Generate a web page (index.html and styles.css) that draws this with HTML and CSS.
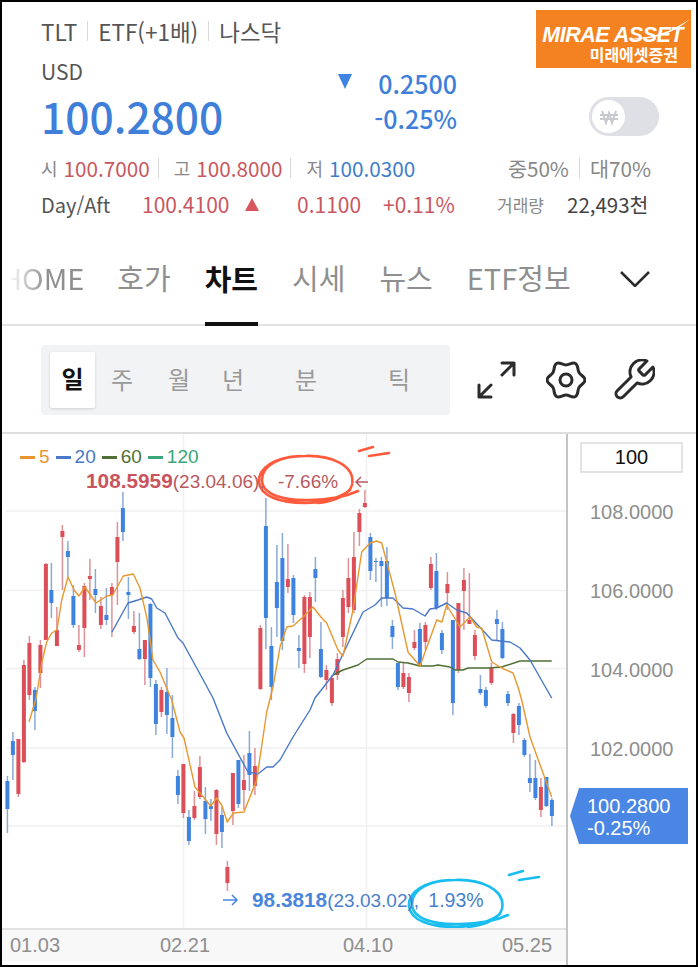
FILE: index.html
```html
<!DOCTYPE html>
<html lang="ko">
<head>
    <meta charset="UTF-8">
    <meta name="viewport" content="width=device-width, initial-scale=1.0">
    <title>TLT 차트</title>
    <link rel="stylesheet" href="styles.css">
</head>
<body>
<div class="page">

    <div class="logo">
        <div class="logo-en">MIRAE ASSET</div>
        <div class="logo-ko">미래에셋증권</div>
        <svg class="logo-swoosh" viewBox="0 0 155 58"><path d="M92 28 C115 29 135 22 154 9 C136 25 114 31 92 28z"/></svg>
    </div>

    <header class="quote">
        <div class="meta">
            <span>TLT</span><i class="sep"></i><span>ETF(+1배)</span><i class="sep"></i><span>나스닥</span>
        </div>
        <div class="quote-main">
            <div class="price-col">
                <div class="usd">USD</div>
                <div class="price">100.2800</div>
            </div>
            <div class="change-col">
                <div class="change-row"><span class="arrow-down"></span><span>0.2500</span></div>
                <div class="change-row"><span></span><span>-0.25%</span></div>
            </div>
            <div class="toggle">
                <div class="toggle-knob">
                    <svg viewBox="0 0 24 24" width="24" height="24"><path d="M3 10h18M3 14h18M5 6l4 12 3-10 3 10 4-12"/></svg>
                </div>
            </div>
        </div>
        <div class="stats">
            <div class="stats-left">
                <span class="label">시</span><span class="up">100.7000</span><i class="sep"></i>
                <span class="label">고</span><span class="up">100.8000</span><i class="sep"></i>
                <span class="label">저</span><span class="down">100.0300</span>
            </div>
            <div class="stats-right">
                <span>중50%</span><i class="sep"></i><span>대70%</span>
            </div>
        </div>
        <div class="after">
            <span class="after-name">Day/Aft</span>
            <span class="up after-price">100.4100</span>
            <span class="arrow-up"></span>
            <span class="up after-diff">0.1100</span>
            <span class="up after-rate">+0.11%</span>
            <span class="volume-label">거래량</span>
            <span class="volume">22,493천</span>
        </div>
    </header>

    <nav class="tabs">
        <a class="tab tab-home">HOME</a>
        <a class="tab">호가</a>
        <a class="tab active">차트</a>
        <a class="tab">시세</a>
        <a class="tab">뉴스</a>
        <a class="tab">ETF정보</a>
        <svg class="tab-more" viewBox="0 0 30 16"><path d="M1 1l14 14L29 1"/></svg>
    </nav>

    <div class="toolbar">
        <div class="periods">
            <span class="period active">일</span>
            <span class="period">주</span>
            <span class="period">월</span>
            <span class="period">년</span>
            <span class="period">분</span>
            <span class="period">틱</span>
        </div>
        <svg class="tool tool-expand" viewBox="0 0 40 40">
            <path d="M26 3h12v12M38 3L26 15M15 25L3 37M3 25v12h12"/>
        </svg>
        <svg class="tool tool-gear" viewBox="0 0 40 40">
            <path d="M20 5C23.5 5 26.47 1.8 29.5 3.55C32.53 5.3 31.24 9.47 32.99 12.5C34.74 15.53 39 16.5 39 20C39 23.5 34.74 24.47 32.99 27.5C31.24 30.53 32.53 34.7 29.5 36.45C26.47 38.2 23.5 35 20 35C16.5 35 13.53 38.2 10.5 36.45C7.47 34.7 8.76 30.53 7.01 27.5C5.26 24.47 1 23.5 1 20C1 16.5 5.26 15.53 7.01 12.5C8.76 9.47 7.47 5.3 10.5 3.55C13.53 1.8 16.5 5 20 5z"/>
            <circle cx="20" cy="20" r="6"/>
        </svg>
        <svg class="tool tool-wrench" viewBox="1.5 1.5 21 21">
            <path d="M14.7 6.3a1 1 0 0 0 0 1.4l1.6 1.6a1 1 0 0 0 1.4 0l3.77-3.77a6 6 0 0 1-7.94 7.94l-6.91 6.91a2.12 2.12 0 0 1-3-3l6.91-6.91a6 6 0 0 1 7.94-7.94l-3.76 3.76z"/>
        </svg>
    </div>

    <section class="chart">
        <div class="plot">
            <div class="canvas">
                <svg id="chart-svg" viewBox="2 434 564 494" width="564" height="494"></svg>
                <div class="legend">
                    <span class="ma ma5">5</span>
                    <span class="ma ma20">20</span>
                    <span class="ma ma60">60</span>
                    <span class="ma ma120">120</span>
                </div>
                <div class="high-label"><b>108.5959</b>(23.04.06), <span class="high-pct">-7.66%</span></div>
                <div class="low-label"><b>98.3818</b>(23.03.02), <span class="low-pct">1.93%</span></div>
            </div>
            <div class="xaxis">
                <span>01.03</span>
                <span>02.21</span>
                <span>04.10</span>
                <span>05.25</span>
            </div>
        </div>
        <aside class="yaxis">
            <div class="unit-box">100</div>
            <div class="ticks">
                <span>108.0000</span>
                <span>106.0000</span>
                <span>104.0000</span>
                <span>102.0000</span>
            </div>
            <div class="now-tag">100.2800<br>-0.25%</div>
        </aside>
    </section>
</div>
<script src="chart.js"></script>
</body>
</html>
```

FILE: styles.css
```css
body, html {
    margin: 0;
    padding: 0;
    background-color: white;
    font-family: "Noto Sans CJK KR", "Noto Sans", sans-serif;
}

.page {
    position: relative;
    width: 698px;
    height: 967px;
    box-sizing: border-box;
    border: 2px solid black;
    overflow: hidden;
    background-color: white;
}

.sep {
    display: inline-block;
    width: 1px;
    height: 20px;
    background-color: #d9d9d9;
}

.up {
    color: #c9575f;
}

.down {
    color: #3f7ec8;
}

/* logo */
.logo {
    position: absolute;
    top: 8px;
    left: 534px;
    width: 155px;
    height: 58px;
    background-color: #f58220;
    color: white;
    text-align: right;
    font-family: "Liberation Sans", sans-serif;
    font-weight: bold;
}

.logo-en {
    font-size: 21.5px;
    font-style: italic;
    line-height: 20px;
    letter-spacing: -0.5px;
    padding: 15px 8px 0 0;
    white-space: nowrap;
}

.logo-ko {
    font-family: "Noto Sans CJK KR", sans-serif;
    font-size: 16px;
    line-height: 16px;
    padding: 1px 13px 0 0;
}

.logo-swoosh {
    position: absolute;
    top: 0;
    left: 0;
    width: 155px;
    height: 58px;
}

.logo-swoosh path {
    fill: white;
}

/* quote header */
.quote {
    padding: 15px 45px 12px 39px;
    height: 204px;
    color: #555;
}

.meta {
    display: flex;
    align-items: center;
    gap: 10px;
    font-size: 22.5px;
    line-height: 28px;
    color: #555;
}

.quote-main {
    display: flex;
    margin-top: 12px;
}

.price-col {
    flex: none;
    width: 297px;
}

.usd {
    font-size: 21px;
    line-height: 28px;
}

.price {
    font-size: 42.5px;
    line-height: 60px;
    font-weight: 500;
    color: #3f7fd9;
    margin-top: 1px;
}

.change-col {
    flex: none;
    width: 119px;
    padding-top: 8px;
    color: #3f7fd9;
    font-size: 25px;
    font-weight: 500;
}

.change-row {
    display: flex;
    justify-content: space-between;
    align-items: center;
    height: 35.5px;
}

.arrow-down {
    width: 0;
    height: 0;
    border-left: 7px solid transparent;
    border-right: 7px solid transparent;
    border-top: 15px solid #3f84e5;
    margin-top: -2px;
}

.toggle {
    flex: none;
    width: 70px;
    height: 39px;
    margin: 40px 0 0 132px;
    padding: 3px;
    box-sizing: border-box;
    background-color: #dfe0e5;
    border-radius: 20px;
}

.toggle-knob {
    display: flex;
    align-items: center;
    justify-content: center;
    width: 33px;
    height: 33px;
    background-color: white;
    border-radius: 50%;
}

.toggle-knob svg {
    fill: none;
    stroke: #c9cacf;
    stroke-width: 2;
}

.stats {
    display: flex;
    justify-content: space-between;
    align-items: center;
    height: 30px;
    margin-top: 7px;
    font-size: 20.7px;
}

.stats-left,
.stats-right {
    display: flex;
    align-items: center;
}

.stats-left {
    gap: 6px;
}

.stats-left .sep {
    margin: 0 9px 0 2px;
}

.stats-right {
    gap: 10px;
    color: #888;
}

.label {
    color: #888;
    font-size: 18px;
}

.after {
    display: flex;
    align-items: center;
    height: 30px;
    margin-top: 6px;
    font-size: 21px;
}

.after-name {
    width: 101px;
    font-size: 20px;
}

.after-price {
    width: 103px;
}

.arrow-up {
    width: 0;
    height: 0;
    border-left: 7px solid transparent;
    border-right: 7px solid transparent;
    border-bottom: 13px solid #d9565c;
    margin-right: 38px;
}

.after-diff {
    width: 86px;
}

.after-rate {
    width: 114px;
}

.volume-label {
    width: 70px;
    font-size: 17px;
    color: #888;
}

.volume {
    color: #444;
    font-size: 20.5px;
    white-space: nowrap;
}

/* tabs */
.tabs {
    display: flex;
    align-items: center;
    height: 91px;
    margin-left: -1px;
    border-bottom: 2px solid #e2e2e2;
    position: relative;
}

.tab {
    display: flex;
    align-items: center;
    height: 91px;
    box-sizing: border-box;
    margin-right: 34px;
    padding-bottom: 3px;
    font-size: 29px;
    color: #8f8f8f;
}

.tab-home {
    margin-right: 33px;
    -webkit-mask-image: linear-gradient(to right, transparent 8px, #000 44px);
    mask-image: linear-gradient(to right, transparent 8px, #000 44px);
}

.tab.active {
    color: #111;
    font-weight: bold;
    border-bottom: 4px solid #111;
    margin-bottom: -2px;
    height: 93px;
    padding-bottom: 0;
}

.tab-more {
    width: 30px;
    height: 16px;
    margin-left: 15px;
    fill: none;
    stroke: #2b2b2b;
    stroke-width: 2.5;
}

/* period bar */
.toolbar {
    display: flex;
    align-items: center;
    padding: 19px 0 17px 39px;
}

.periods {
    display: grid;
    grid-template-columns: 45px 54px 60px 48px 98px 88px;
    align-items: center;
    box-sizing: border-box;
    width: 409px;
    height: 70px;
    padding: 7px 9px;
    background-color: #f2f3f5;
    border-radius: 4px;
}

.period {
    padding-bottom: 4px;
    text-align: center;
    font-size: 24px;
    color: #999;
}

.period.active {
    background-color: white;
    color: #111;
    font-weight: bold;
    line-height: 52px;
    border-radius: 2px;
    box-shadow: 0 1px 3px rgba(0, 0, 0, 0.15);
}

.tool {
    width: 40px;
    height: 40px;
    fill: none;
    stroke: #2b2b2b;
    stroke-linejoin: round;
    stroke-linecap: round;
    stroke-width: 3;
}

.tool-expand {
    margin-left: 26px;
}

.tool-gear {
    margin-left: 30px;
}

.tool-wrench {
    width: 42px;
    height: 42px;
    margin-left: 27px;
    stroke-width: 1.5;
}

/* chart */
.chart {
    display: flex;
    border-top: 2px solid #dedede;
    height: 531px;
}

.plot {
    width: 564px;
    font-family: "Liberation Sans", sans-serif;
}

.canvas {
    position: relative;
    height: 494px;
}

.canvas svg {
    display: block;
}

.legend {
    position: absolute;
    top: 12px;
    left: 18px;
    display: flex;
    gap: 6px;
    font-size: 19px;
    line-height: 22px;
}

.ma {
    display: flex;
    align-items: center;
    gap: 4px;
}

.ma::before {
    content: "";
    width: 15px;
    height: 3px;
    background-color: currentColor;
}

.ma5 {
    color: #e8952f;
}

.ma20 {
    color: #4a78c8;
}

.ma60 {
    color: #4f6f35;
}

.ma120 {
    color: #3aa679;
}

.high-label,
.low-label {
    position: absolute;
    font-size: 19px;
    line-height: 22px;
    white-space: nowrap;
}

.high-label {
    top: 36px;
    left: 84px;
    color: #b85a60;
}

.high-label b {
    font-size: 20.8px;
    color: #c9545d;
}

.high-pct {
    margin-left: 8px;
}

.low-label {
    top: 455px;
    left: 250px;
    color: #4a7fc9;
}

.low-label b {
    font-size: 20.8px;
    color: #4a86dc;
}

.low-pct {
    margin-left: 4px;
    font-size: 19.5px;
}

.xaxis {
    display: grid;
    grid-template-columns: 150px 183px 159px 60px;
    align-items: center;
    height: 31px;
    margin: 0 0 4px;
    padding: 0 0 0 8px;
    border-top: 2px solid #e2e2e2;
    background-color: #f8f8f8;
    font-size: 20px;
    color: #8e8e8e;
}

.yaxis {
    position: relative;
    flex: 1;
    border-left: 2px solid #c4c4c4;
    font-family: "Liberation Sans", sans-serif;
    font-size: 20px;
}

.unit-box {
    width: 99px;
    height: 27px;
    margin: 8px 0 0 12px;
    border: 2px solid #e3e3e3;
    text-align: center;
    line-height: 27px;
    color: #111;
}

.ticks {
    display: grid;
    grid-auto-rows: 79px;
    margin-top: 24px;
    padding-left: 22px;
    color: #8e8e8e;
    line-height: 30px;
}

.now-tag {
    position: absolute;
    top: 354px;
    left: 2px;
    width: 118px;
    height: 56px;
    box-sizing: border-box;
    padding: 7px 0 0 17px;
    background-color: #4a86e4;
    color: white;
    line-height: 22px;
    clip-path: polygon(9px 0, 100% 0, 100% 100%, 9px 100%, 0 50%);
}
```

FILE: chart.js
```js
// candles: [type, wick top, body top, body bottom, wick bottom], y in page pixels
const candles = [
    ["b",776,781,809,833],["b",732,741,755,780],["r",739,739,794,797],["r",660,665,762,763],["r",636,643,695,700],
    ["b",687,690,711,730],["r",640,645,673,688],["r",563,564,640,640],["b",563,590,603,618],["r",607,630,646,646],
    ["r",525,531,537,590],["b",541,551,557,577],["b",585,596,625,628],["r",625,645,650,652],["r",583,586,628,657],
    ["r",559,576,579,600],["b",569,589,595,613],["r",597,606,625,629],["b",588,615,620,625],["r",583,587,595,637],
    ["r",522,537,562,605],["b",492,508,532,541],["b",577,592,595,619],["r",611,626,632,634],["b",613,649,659,660],
    ["r",640,640,659,685],["b",603,604,678,687],["b",680,684,724,735],["r",687,690,712,717],["b",668,692,715,734],
    ["b",695,718,737,758],["b",770,776,795,804],["r",764,764,813,818],["b",810,817,841,845],["r",791,806,818,820],
    ["r",756,767,797,799],["b",787,801,819,834],["b",799,806,809,821],["r",789,790,834,845],["b",807,815,832,848],
    ["r",861,867,883,891],["r",773,773,811,825],["b",760,760,804,808],["r",755,780,790,810],["b",731,753,775,791],
    ["r",748,766,786,795],["r",625,628,689,690],["b",498,526,618,649],["b",627,646,687,700],["b",545,582,608,637],
    ["b",533,558,641,650],["r",544,579,587,593],["b",575,578,615,623],["b",635,648,651,668],["r",595,597,664,673],
    ["r",592,597,637,658],["b",557,569,578,602],["b",622,649,677,678],["r",665,670,680,690],["r",675,678,703,706],
    ["r",653,659,675,680],["r",590,598,637,647],["r",558,578,607,613],["r",532,557,610,613],["r",509,513,532,546],
    ["r",490,503,507,508],["b",533,537,571,580],["b",558,561,562,582],["b",557,561,566,607],["b",547,561,598,606],
    ["b",620,626,637,649],["b",663,663,687,690],["r",662,673,687,689],["r",673,677,693,702],["r",630,642,648,650],
    ["b",623,629,665,667],["r",622,625,642,650],["r",557,564,588,590],["b",553,571,608,610],["b",630,633,650,654],
    ["r",572,584,593,610],["b",620,620,703,715],["r",603,603,670,673],["r",568,580,591,630],["r",573,620,624,624],
    ["r",630,635,656,660],["b",675,689,693,695],["b",687,690,706,708],["r",663,668,683,685],["b",610,619,624,640],
    ["b",622,629,658,659],["b",691,694,703,706],["r",713,714,733,743],["b",703,706,725,735],["b",738,740,755,757],
    ["b",754,778,783,792],["b",760,778,798,800],["r",778,787,810,817],["b",777,777,806,807],["b",798,800,816,826]
];

const ma5 = "29,722 35,702 37,693 41.7,663 46.7,642 51.7,633 57,630 61.7,600 68,577 74,590 79,596 85,587 96,603 106.7,596 112.7,595 123.3,576 133.3,574 140,588 146.7,617 153,660 160,672 171.7,700 180,732 184,738 195,787 210.7,806 216.7,798 221.7,805 227.3,822 233.3,813 244,812 256.7,780 266.7,712 273,687 280,647 286.7,627 293,626 303,617 313,607 321.7,618 326.7,623 338,650 343,656 353,610 361.7,552 370,543 376.7,541 381.7,543 395,593 408,652 420,666 436.7,620 442,622 446.7,605 460,627 470,617 476.7,627 481.7,628 491.7,662 501.7,668 513,673 518,687 521.7,700 530,737 551.7,797";
const ma20 = "112,632 128,603 138,600 146.7,597 151.7,599 156.7,608 165,613 178,638 183,643 196.7,668 213,698 226.7,733 248,772 258,774 266.7,767 273,767 280,760 293,737 310,710 315,698 333,675 363,612 375,605 381.7,598 393,598 403,608 413,609 425,616 430,609 436.7,608 446.7,603 456.7,610 466.7,613 491.7,640 510,642 520,648 530,660 551.7,698";
const ma60 = "333,675 343,670 358,665 366.7,659 393,659 398,662 408,663 420,666 433,666 438,665 450,667 455,670 463,670 468,668 488,668 501.7,667 520,661 551.7,661";

// hand drawn circle, drawn once per note
const scribble = "M358 491C345 497 328 500 310 500C285 501 262 495 262 480C262 465 280 456 305 456C330 455 356 465 352 485C349 495 335 501 318 503M350 490C340 498 322 503 305 503C280 503 260 496 259 482C258 468 275 457 300 456";
const dashes = "M359 451L373 447M369 456L389 453";

let out = "";

[511, 590.5, 668.5, 748, 826].forEach((y) => {
    out += `<line class="grid" x1="6" x2="566" y1="${y}" y2="${y}"/>`;
});
[183.5, 366.5].forEach((x) => {
    out += `<line class="grid" x1="${x}" x2="${x}" y1="434" y2="928"/>`;
});

candles.forEach((c, i) => {
    const x = 7.4 + 5.5 * i;
    out += `<line class="wick-${c[0]}" x1="${x}" x2="${x}" y1="${c[1]}" y2="${c[4]}"/>`;
    out += `<rect class="body-${c[0]}" x="${x - 2}" y="${c[2]}" width="4" height="${c[3] - c[2]}"/>`;
});

out += `<polyline class="line-60" points="${ma60}"/>`;
out += `<polyline class="line-20" points="${ma20}"/>`;
out += `<polyline class="line-5" points="${ma5}"/>`;

out += `<g class="note-red"><path d="${scribble}"/><path d="${dashes}"/></g>`;
out += `<g class="note-blue" transform="translate(150 424)"><path d="${scribble}"/><path d="${dashes}"/></g>`;

// arrows next to the high and low labels
out += `<path class="arrow-high" d="M368 482H356M361 477L356 482L361 487"/>`;
out += `<path class="arrow-low" d="M223 900H237M232 895L237 900L232 905"/>`;

document.getElementById("chart-svg").innerHTML = `<style>
.grid{stroke:#f0f0f0;stroke-width:1.5}
.wick-r{stroke:#dc9298;stroke-width:1.5}
.wick-b{stroke:#8aa9d6;stroke-width:1.5}
.body-r{fill:#dc4f58}
.body-b{fill:#3f83e0}
polyline{fill:none;stroke-width:1.4;stroke-linejoin:round}
.line-5{stroke:#e8982f}
.line-20{stroke:#4a78c8}
.line-60{stroke:#4f6f35}
.note-red path{fill:none;stroke:#ff5a3c;stroke-width:2.6;stroke-linecap:round}
.note-blue path{fill:none;stroke:#19bdf0;stroke-width:2.6;stroke-linecap:round}
.arrow-high{fill:none;stroke:#b85a60;stroke-width:1.5}
.arrow-low{fill:none;stroke:#4a86dc;stroke-width:1.5}
</style>` + out;
```
